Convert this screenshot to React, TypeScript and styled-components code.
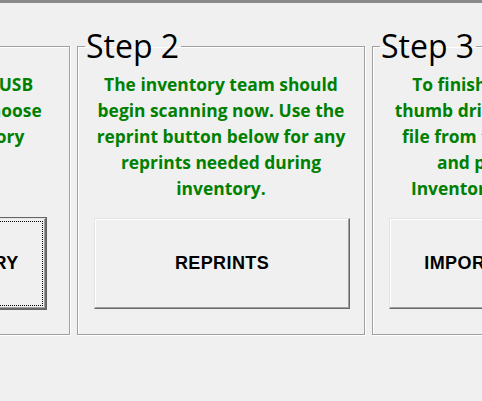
import styled, { createGlobalStyle } from 'styled-components';

const GlobalStyle = createGlobalStyle`
  html, body {
    margin: 0;
    padding: 0;
    background: #f0f0f0;
    overflow: hidden;
  }
`;

const Window = styled.div`
  width: 482px;
  height: 401px;
  background: #f0f0f0;
  overflow: hidden;
  font-family: 'Open Sans', 'Noto Sans', sans-serif;
`;

const TopBar = styled.div`
  height: 3px;
  background: #8a8a8a;
`;

const StepRow = styled.div`
  display: flex;
  gap: 7px;
  margin-top: 23px;
  margin-left: -218px;
`;

const GroupBox = styled.fieldset`
  box-sizing: border-box;
  flex: 0 0 288px;
  height: 309px;
  margin: 0;
  padding: 0 0 0 16px;
  border: 1px solid #a0a0a0;
  box-shadow: inset 1px 1px 0 #ffffff, 1px 1px 0 #ffffff;
  display: flex;
  flex-direction: column;
  min-width: 0;
`;

const Legend = styled.legend`
  margin-left: -9px;
  padding: 0 2px 0 1px;
  font-family: 'Open Sans', 'Noto Sans', sans-serif;
  font-size: 32px;
  line-height: 40px;
  color: #000000;
`;

const Instructions = styled.p`
  margin: 5px 0 0 -16px;
  height: 130px;
  font-family: 'Open Sans', 'Noto Sans', sans-serif;
  font-weight: 700;
  font-size: 17.4px;
  line-height: 26px;
  color: #008000;
  text-align: center;
  white-space: nowrap;
`;

const ActionButton = styled.button<{ $isDefault?: boolean }>`
  box-sizing: border-box;
  width: 256px;
  height: 91px;
  margin-top: 17px;
  margin-left: ${({ $isDefault }) => ($isDefault ? '-9px' : '0')};
  padding: 0;
  background: #f0f0f0;
  border: none;
  border-top: 1px solid #e3e3e3;
  border-left: 1px solid #e3e3e3;
  border-right: 1px solid #696969;
  border-bottom: 1px solid #696969;
  box-shadow: ${({ $isDefault }) =>
    $isDefault ? '0 0 0 1px #646464, inset -1px -1px 0 #a0a0a0' : 'inset -1px -1px 0 #a0a0a0, inset 1px 1px 0 #ffffff'};
  outline: ${({ $isDefault }) => ($isDefault ? '1px dotted #000000' : 'none')};
  outline-offset: -4px;
  font-family: 'Liberation Sans', Arial, sans-serif;
  font-weight: 700;
  font-size: 18px;
  letter-spacing: 0.4px;
  color: #000000;
  white-space: nowrap;
  cursor: pointer;
`;

type Step = {
  title: string;
  lines: string[];
  action: string;
  isDefault?: boolean;
};

const steps: Step[] = [
  {
    title: 'Step 1',
    lines: ['To begin, plug in the USB', 'thumb drive in and choose', 'Begin a New Inventory'],
    action: 'PREPARE INVENTORY',
    isDefault: true,
  },
  {
    title: 'Step 2',
    lines: ['The inventory team should', 'begin scanning now. Use the', 'reprint button below for any', 'reprints needed during', 'inventory.'],
    action: 'REPRINTS',
  },
  {
    title: 'Step 3',
    lines: ['To finish, insert the USB', 'thumb drive and import the', 'file from the scanner guns', 'and print the final', 'Inventory Count Report.'],
    action: 'IMPORT INVENTORY',
  },
];

const App = () => (
  <Window>
    <GlobalStyle />
    <TopBar />
    <StepRow>
      {steps.map((step) => (
        <GroupBox key={step.title}>
          <Legend>{step.title}</Legend>
          <Instructions>
            {step.lines.map((line, index) => (
              <span key={line}>
                {index > 0 && <br />}
                {line}
              </span>
            ))}
          </Instructions>
          <ActionButton $isDefault={step.isDefault}>{step.action}</ActionButton>
        </GroupBox>
      ))}
    </StepRow>
  </Window>
);

export default App;
